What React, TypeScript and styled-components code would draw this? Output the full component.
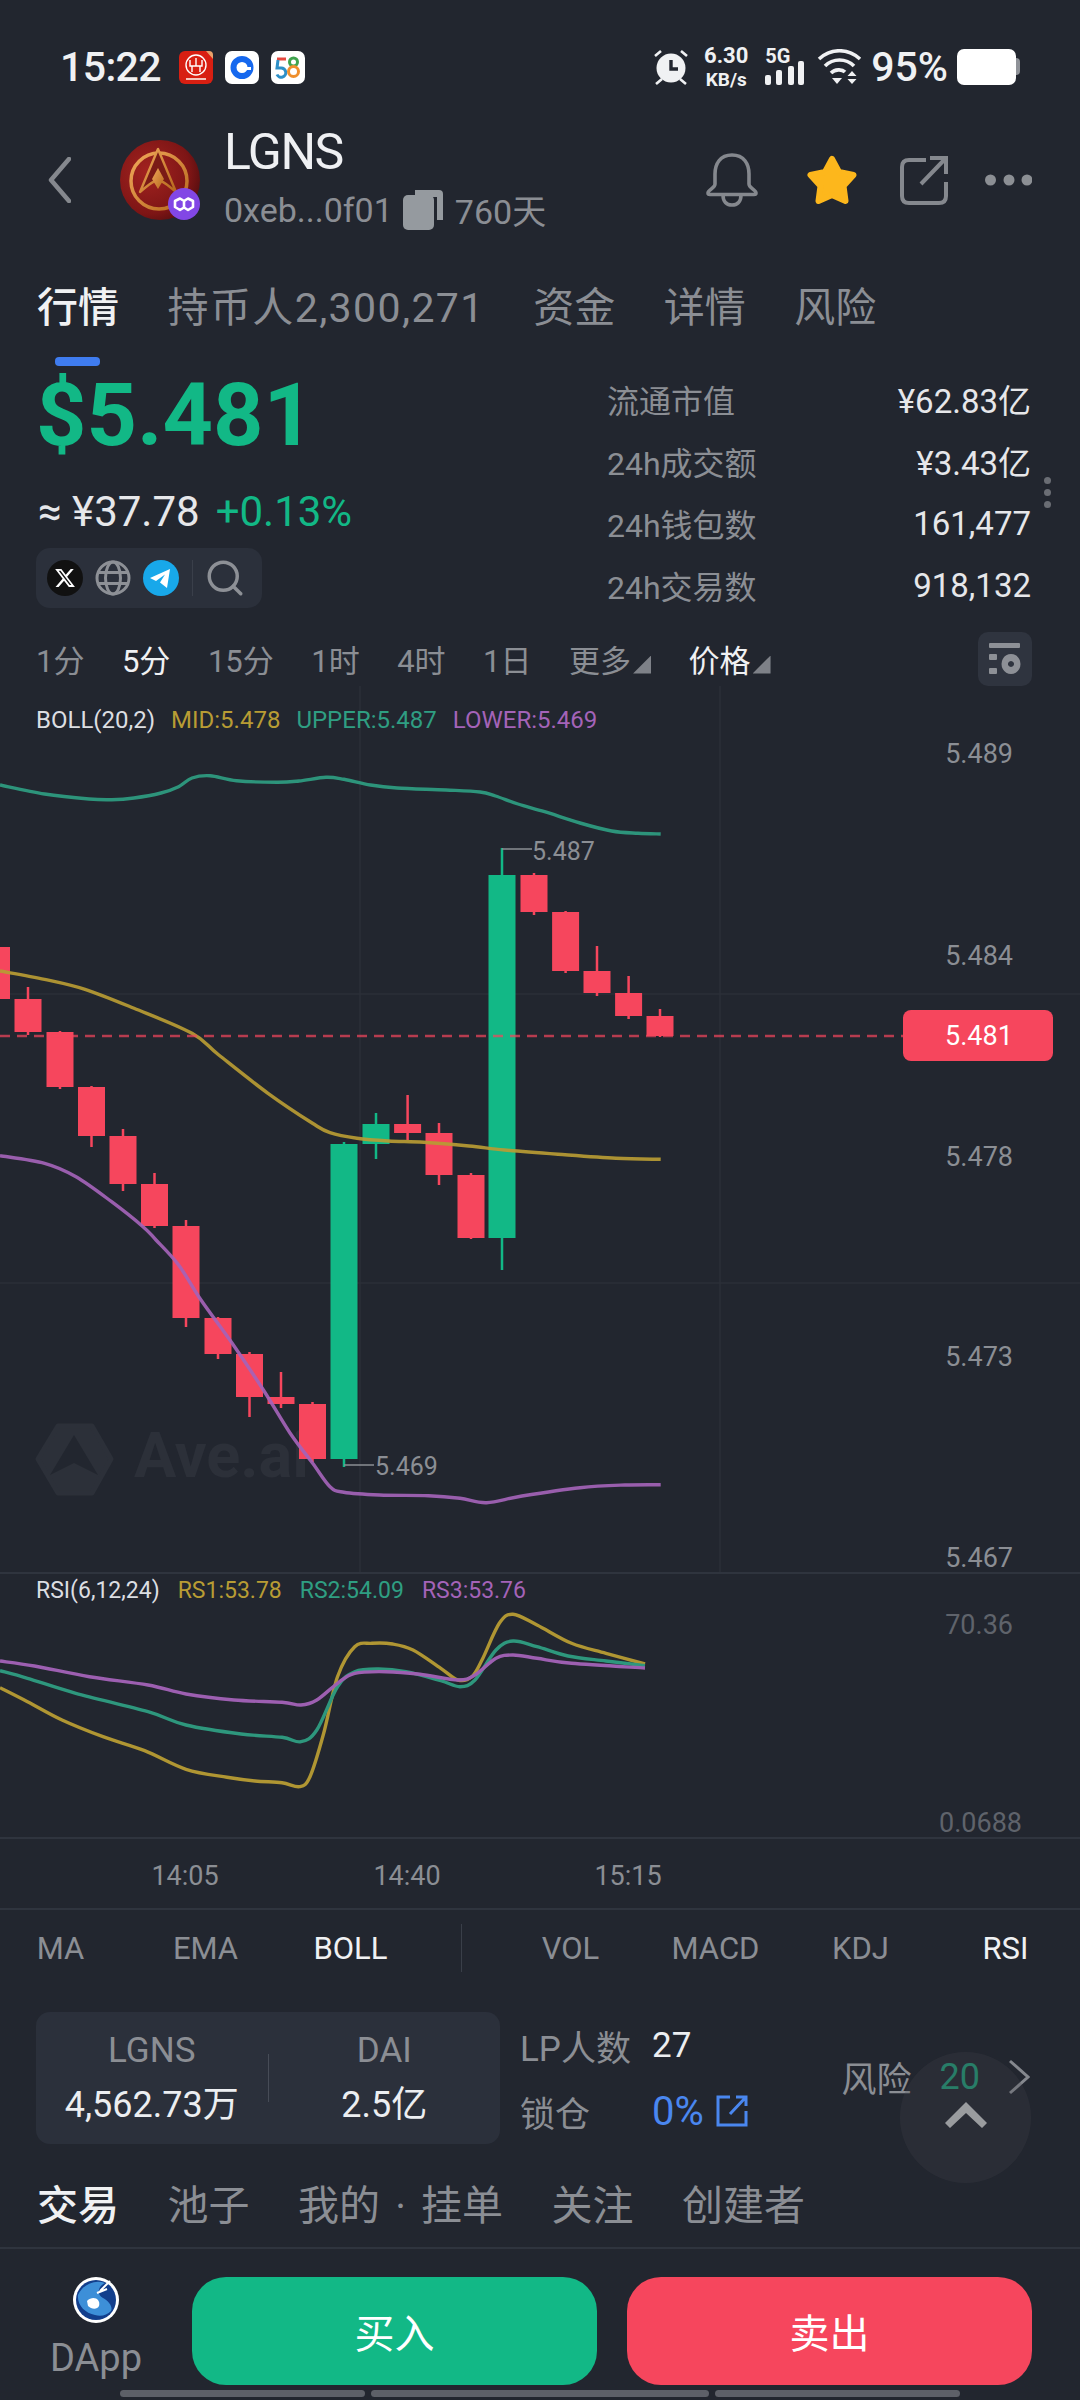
import React from "react";
import styled, { createGlobalStyle } from "styled-components";
import { Search } from "lucide-react";
import { FaXTwitter } from "react-icons/fa6";

const BG = "#22262f";
const PANEL = "#2b303b";
const GREY = "#8b8e94";
const LIGHT = "#eceef1";
const GREEN = "#12b886";
const RED = "#f6465d";
const LINE = "#2f343e";
const C_YELLOW = "#b89c34";
const C_TEAL = "#2f9e82";
const C_PURPLE = "#a463b8";

const GlobalStyle = createGlobalStyle`
  html, body { margin: 0; padding: 0; background: ${BG}; }
  * { box-sizing: border-box; }
  body { font-family: Roboto, "Noto Sans CJK SC", sans-serif; }
`;

const Page = styled.div`
  position: relative;
  width: 1080px;
  height: 2400px;
  overflow: hidden;
  background: ${BG};
  color: ${LIGHT};
  display: flex;
  flex-direction: column;
`;

// status bar
const StatusBar = styled.div`
  height: 128px;
  padding: 6px 60px 0 60px;
  display: flex;
  align-items: center;
  justify-content: space-between;
`;
const StatusLeft = styled.div`
  display: flex;
  align-items: center;
`;
const Clock = styled.span`
  font-size: 41px;
  font-weight: 500;
  letter-spacing: -0.6px;
  margin-right: 18px;
  color: #f0f1f3;
`;
const AppIcons = styled.div`
  display: flex;
  gap: 12px;
`;
const StatusRight = styled.div`
  display: flex;
  align-items: center;
  color: #f0f1f3;
`;
const Speed = styled.div`
  display: flex;
  flex-direction: column;
  align-items: center;
  width: 46px;
  margin: 0 16px 0 14px;
  font-weight: 700;
  line-height: 1;
`;
const SpeedValue = styled.span`
  font-size: 22px;
  margin-bottom: 3px;
`;
const SpeedUnit = styled.span`
  font-size: 19px;
`;
const Network = styled.div`
  display: flex;
  flex-direction: column;
  align-items: flex-start;
  width: 42px;
  margin-right: 10px;
`;
const FiveG = styled.span`
  font-size: 20px;
  font-weight: 700;
  line-height: 14px;
  margin-bottom: -2px;
`;
const Percent = styled.span`
  font-size: 41px;
  font-weight: 500;
  margin: 0 9px;
`;

// header
const Header = styled.div`
  height: 104px;
  padding: 0 48px;
  display: flex;
  align-items: center;
`;
const AvatarWrap = styled.div`
  position: relative;
  width: 80px;
  height: 80px;
  margin: 0 24px 0 49px;
`;
const Badge = styled.div`
  position: absolute;
  right: 0;
  bottom: 0;
  width: 32px;
  height: 32px;
  border-radius: 50%;
  background: #8247e5;
  display: flex;
  align-items: center;
  justify-content: center;
`;
const TokenInfo = styled.div`
  display: flex;
  flex-direction: column;
  gap: 12px;
  margin-bottom: 5px;
`;
const TokenName = styled.div`
  font-size: 50px;
  line-height: 52px;
  letter-spacing: -1.5px;
  color: #eff0f3;
`;
const TokenMeta = styled.div`
  display: flex;
  align-items: center;
  height: 40px;
  font-size: 34px;
  color: ${GREY};
`;
const HeaderActions = styled.div`
  margin-left: auto;
  display: flex;
  align-items: center;
`;

// tabs
const Tabs = styled.div<{ $top: number }>`
  display: flex;
  gap: 48.5px;
  height: 50px;
  margin-top: ${(p) => p.$top}px;
  padding-left: 37px;
  align-items: center;
`;
const Tab = styled.span<{ $active?: boolean; $spaced?: boolean }>`
  font-size: 41px;
  line-height: 50px;
  white-space: pre;
  word-spacing: 5px;
  letter-spacing: ${(p) => (p.$spaced ? 1.4 : 0)}px;
  font-weight: ${(p) => (p.$active ? 500 : 400)};
  color: ${(p) => (p.$active ? "#f0f1f3" : GREY)};
`;
const TabMarker = styled.div`
  width: 45px;
  height: 9px;
  border-radius: 4px;
  background: #3f7cf0;
  margin: 24px 0 0 55px;
`;

// quote
const Quote = styled.div`
  position: relative;
  height: 254px;
  padding: 4px 49px 0 36px;
  display: flex;
  justify-content: space-between;
`;
const QuoteLeft = styled.div`
  display: flex;
  flex-direction: column;
  align-items: flex-start;
`;
const Price = styled.div`
  font-size: 88px;
  line-height: 90px;
  font-weight: 700;
  color: ${GREEN};
`;
const Fiat = styled.div`
  font-size: 42px;
  line-height: 50px;
  margin: 27px 0 11px 2px;
  color: #e6e7ea;
`;
const Change = styled.span`
  color: ${GREEN};
  margin-left: 16px;
`;
const SocialBox = styled.div`
  width: 226px;
  height: 60px;
  border-radius: 14px;
  background: ${PANEL};
  display: flex;
  align-items: center;
  padding-left: 11px;
  gap: 12px;
`;
const SocialSep = styled.div`
  width: 1px;
  height: 36px;
  background: #3a3f4a;
  margin: 0 -1px 0 1px;
`;
const XIcon = styled.div`
  width: 36px;
  height: 36px;
  border-radius: 50%;
  background: #111;
  display: flex;
  align-items: center;
  justify-content: center;
  color: #fff;
`;
const Stats = styled.div`
  width: 424px;
  margin-top: -2px;
`;
const StatRow = styled.div`
  height: 62px;
  display: flex;
  align-items: center;
  justify-content: space-between;
  font-size: 32px;
`;
const StatLabel = styled.span`
  color: ${GREY};
`;
const StatValue = styled.span`
  font-size: 33px;
  color: #e6e7ea;
`;
const SideDots = styled.div`
  position: absolute;
  left: 1044px;
  top: 111px;
  display: flex;
  flex-direction: column;
  gap: 5px;
`;
const SideDot = styled.div`
  width: 7px;
  height: 7px;
  border-radius: 50%;
  background: #6a6d74;
`;

// timeframes
const Timeframes = styled.div`
  height: 54px;
  margin-top: 12px;
  padding: 0 48px 0 36px;
  display: flex;
  align-items: center;
  gap: 37.5px;
  font-size: 31px;
`;
const Frame = styled.span<{ $active?: boolean }>`
  color: ${(p) => (p.$active ? "#f0f1f3" : GREY)};
  display: flex;
  margin-bottom: 2px;
`;
const Corner = styled.i`
  width: 18px;
  height: 18px;
  margin: 20px 0 0 2px;
  background: #7e8188;
  clip-path: polygon(100% 0, 100% 100%, 0 100%);
`;
const SettingsButton = styled.div`
  margin-left: auto;
  width: 54px;
  height: 54px;
  border-radius: 10px;
  background: #2f343f;
  display: flex;
  align-items: center;
  justify-content: center;
`;

// charts
const Chart = styled.div<{ $h: number }>`
  position: relative;
  height: ${(p) => p.$h}px;
  border-bottom: 2px solid ${LINE};
  flex: none;
`;
const Canvas = styled.svg`
  position: absolute;
  left: 0;
  top: 0;
`;
const Legend = styled.div<{ $top: number; $size: number; $gap: number }>`
  position: absolute;
  left: 36px;
  top: ${(p) => p.$top}px;
  display: flex;
  gap: ${(p) => p.$gap}px;
  font-size: ${(p) => p.$size}px;
  line-height: 28px;
  white-space: nowrap;
`;
const LegendItem = styled.span<{ $color: string }>`
  color: ${(p) => p.$color};
`;
const AxisLabel = styled.span<{ $y: number; $dim?: boolean }>`
  position: absolute;
  right: 67px;
  top: ${(p) => p.$y - 15}px;
  font-size: 27px;
  line-height: 32px;
  color: ${(p) => (p.$dim ? "#5f636b" : GREY)};
`;
const AxisLabelCenter = styled(AxisLabel)`
  right: 58px;
`;
const PeakLabel = styled.span<{ $x: number; $y: number }>`
  position: absolute;
  left: ${(p) => p.$x}px;
  top: ${(p) => p.$y - 15}px;
  font-size: 25px;
  line-height: 30px;
  color: ${GREY};
`;
const PriceTag = styled.div`
  position: absolute;
  left: 903px;
  top: 324px;
  width: 150px;
  height: 51px;
  border-radius: 8px;
  background: ${RED};
  color: #fff;
  font-size: 27px;
  padding-left: 2px;
  display: flex;
  align-items: center;
  justify-content: center;
`;
const Watermark = styled.span`
  position: absolute;
  left: 134px;
  top: 734px;
  font-size: 63px;
  line-height: 72px;
  font-weight: 700;
  color: #2c3039;
`;
const TimeLabel = styled.span<{ $x: number }>`
  position: absolute;
  left: ${(p) => p.$x}px;
  top: 21px;
  transform: translateX(-50%);
  font-size: 27px;
  line-height: 32px;
  color: ${GREY};
`;

// indicators
const Indicators = styled.div`
  height: 76px;
  display: flex;
  align-items: center;
  margin-left: -12px;
`;
const IndicatorCell = styled.span<{ $active?: boolean }>`
  flex: none;
  width: 145px;
  text-align: center;
  font-size: 31px;
  color: ${(p) => (p.$active ? "#f0f1f3" : GREY)};
`;
const IndicatorSep = styled.div`
  flex: none;
  width: 1px;
  height: 48px;
  background: #3a3f49;
  margin: 0 36px 0 38px;
`;

// pool row
const PoolRow = styled.div`
  height: 132px;
  margin-top: 26px;
  padding: 0 50px 0 36px;
  display: flex;
  align-items: center;
`;
const PoolCard = styled.div`
  width: 464px;
  height: 132px;
  border-radius: 14px;
  background: ${PANEL};
  display: flex;
  align-items: center;
`;
const PoolCol = styled.div`
  flex: 1;
  display: flex;
  flex-direction: column;
  align-items: center;
  gap: 10px;
`;
const PoolName = styled.span`
  font-size: 35px;
  line-height: 44px;
  color: ${GREY};
`;
const PoolValue = styled.span`
  font-size: 36px;
  line-height: 44px;
  color: #eceef1;
`;
const PoolSep = styled.div`
  width: 1px;
  height: 48px;
  background: #474c57;
`;
const LpCol = styled.div`
  margin-left: 20px;
  display: flex;
  flex-direction: column;
`;
const LpRow = styled.div`
  height: 66px;
  display: flex;
  align-items: center;
  font-size: 35px;
`;
const LpLabel = styled.span`
  width: 132px;
  color: ${GREY};
`;
const LockValue = styled.span`
  font-size: 40px;
  color: #4a87f0;
  margin-right: 12px;
`;
const Risk = styled.div`
  margin-left: auto;
  display: flex;
  align-items: center;
  font-size: 35px;
  color: ${GREY};
  margin-bottom: 3px;
`;
const RiskScore = styled.span`
  font-size: 36px;
  color: #1f8f70;
  margin: 0 28px;
`;
const FloatingTop = styled.div`
  position: absolute;
  left: 900px;
  top: 2052px;
  width: 131px;
  height: 131px;
  border-radius: 50%;
  background: rgba(70, 72, 78, 0.24);
  display: flex;
  justify-content: center;
  padding-top: 50px;
`;

// bottom
const Divider = styled.div`
  height: 2px;
  margin-top: 16px;
  background: ${LINE};
`;
const ActionBar = styled.div`
  height: 136px;
  padding: 28px 48px 0 36px;
  display: flex;
`;
const DappCol = styled.div`
  width: 120px;
  margin-right: 36px;
  display: flex;
  flex-direction: column;
  align-items: center;
  gap: 13px;
`;
const DappLabel = styled.span`
  font-size: 38px;
  line-height: 44px;
  color: ${GREY};
`;
const TradeButton = styled.div<{ $color: string }>`
  width: 405px;
  height: 108px;
  border-radius: 34px;
  background: ${(p) => p.$color};
  color: #fff;
  font-size: 40px;
  display: flex;
  align-items: center;
  justify-content: center;
  margin-right: 30px;
  &:last-child { margin-right: 0; }
`;
const NavPills = styled.div`
  margin-top: 5px;
  display: flex;
  justify-content: center;
  gap: 6px;
`;
const NavPill = styled.div<{ $w: number }>`
  width: ${(p) => p.$w}px;
  height: 7px;
  border-radius: 4px;
  background: #5d6068;
`;

// chart data, absolute page coordinates
type P = [number, number];

const smooth = (pts: P[]) => {
  let d = `M${pts[0][0]} ${pts[0][1]}`;
  for (let i = 0; i < pts.length - 1; i++) {
    const p0 = pts[i - 1] || pts[i];
    const p1 = pts[i];
    const p2 = pts[i + 1];
    const p3 = pts[i + 2] || p2;
    const c1x = p1[0] + (p2[0] - p0[0]) / 6;
    const c1y = p1[1] + (p2[1] - p0[1]) / 6;
    const c2x = p2[0] - (p3[0] - p1[0]) / 6;
    const c2y = p2[1] - (p3[1] - p1[1]) / 6;
    d += `C${c1x} ${c1y} ${c2x} ${c2y} ${p2[0]} ${p2[1]}`;
  }
  return d;
};

const upper: P[] = [[0,785],[44.6,794],[89,799],[111.6,799.7],[134,798],[161,793],[178.6,786.7],[192,778],[210,775.7],[236.6,780.7],[277,782.3],[299,781],[326,777.3],[344,779.3],[370.5,785],[397,788],[446,790],[480,792],[495.5,796],[518,804],[544.6,811.7],[580,823],[611.6,831],[638,833.3],[660.7,834]];
const mid: P[] = [[0,971],[44.6,979.3],[85,989.3],[134,1008.3],[192,1033.3],[218.8,1055],[268,1093.3],[312.5,1123.3],[330,1132.7],[357,1138.3],[388.4,1141],[424,1142.3],[469,1146],[504.5,1150],[558,1154.3],[616,1158.3],[660.7,1159.3]];
const lower: P[] = [[0,1155.7],[44.6,1163.3],[76,1176.7],[111.6,1201.7],[143,1226.7],[156,1240],[178.6,1265],[201,1300],[232,1343],[263.4,1390],[290,1433],[312.5,1463],[330,1486.7],[343.8,1492.3],[379.5,1495],[428.6,1495.7],[460,1498.3],[486.6,1502.7],[522,1496],[580,1487.7],[625,1485],[660.7,1484.7]];

const rsi1: P[] = [[0,1687.7],[27.5,1701.7],[62,1720],[103,1736.7],[144.6,1750.7],[186,1769.3],[227,1777.3],[255,1781],[282,1782.7],[299.6,1786.7],[310,1776.7],[323.7,1733.3],[337.5,1676.7],[354.7,1646.7],[372,1643.3],[392.6,1644],[413,1650],[440.8,1668.3],[458,1680],[471.8,1676.7],[482,1660],[499.3,1623.3],[513,1614.3],[537,1625],[571.6,1643.3],[606,1653.3],[645,1664]];
const rsi2: P[] = [[0,1670.7],[27.5,1678.3],[75.8,1693.3],[148,1711.7],[186,1725],[241,1734],[282,1737.3],[301,1741.7],[316.8,1730],[337.5,1686.7],[354.7,1671.7],[378.8,1669],[406,1671.7],[440.8,1680.7],[460,1686.7],[475,1680],[496,1650],[513,1641],[537,1646.7],[568,1656],[606,1661],[645,1665.7]];
const rsi3: P[] = [[0,1661],[34.4,1666],[89.5,1676.7],[148,1685],[186,1694],[234,1700],[282,1702.3],[301,1705],[316.8,1700],[337.5,1683.3],[354.7,1673.3],[385.7,1671.7],[420,1674.3],[458,1680],[475,1675],[496,1658.3],[513,1655],[537,1658.3],[571.6,1663.3],[645,1668]];

// cx, body top, body bottom, wick top, wick bottom, up
const candles: [number, number, number, number, number, boolean][] = [
  [-3.5, 947, 999, 947, 999, false],
  [28, 999, 1032, 987, 1035, false],
  [60, 1032, 1087, 1031, 1089, false],
  [91.5, 1087, 1136, 1086, 1147, false],
  [123, 1136, 1184, 1129, 1191, false],
  [154.5, 1184, 1226, 1173, 1228, false],
  [186, 1226, 1318, 1220, 1327, false],
  [218, 1318, 1354, 1317, 1359, false],
  [249.5, 1354, 1397, 1352, 1417, false],
  [281, 1397, 1404, 1372, 1408, false],
  [312.5, 1404, 1459, 1402, 1462, false],
  [344, 1144, 1459, 1142, 1467, true],
  [376, 1124, 1144, 1113, 1159, true],
  [407.6, 1124, 1133, 1095, 1140, false],
  [439, 1133, 1175, 1123, 1185, false],
  [471, 1175, 1238, 1173, 1239, false],
  [502, 875, 1238, 848, 1270, true],
  [534, 875, 912, 873, 915, false],
  [565.6, 912, 971, 911, 973, false],
  [597, 971, 993, 946, 996, false],
  [628.6, 993, 1016, 976, 1019, false],
  [660, 1016, 1036, 1009, 1037, false],
];

const axis = [
  { v: "5.489", y: 67 },
  { v: "5.484", y: 269 },
  { v: "5.478", y: 470 },
  { v: "5.473", y: 670 },
  { v: "5.467", y: 871 },
];

const frames = ["1分", "5分", "15分", "1时", "4时", "1日"];

const stats = [
  ["流通市值", "¥62.83亿"],
  ["24h成交额", "¥3.43亿"],
  ["24h钱包数", "161,477"],
  ["24h交易数", "918,132"],
];

// icons
const RedApp = () => (
  <svg width="34" height="33" viewBox="0 0 34 33">
    <rect width="34" height="33" rx="6" fill="#d81f12" />
    <path d="M27 0h3a4 4 0 0 1 4 4v4z" fill="#e9a16a" />
    <circle cx="17" cy="14" r="10" fill="none" stroke="#fff" strokeWidth="1.4" />
    <path d="M11 9v6h12V9M17 7v8M13 15v6M21 15v6" fill="none" stroke="#fff" strokeWidth="1.4" />
    <rect x="7" y="27" width="20" height="2" fill="#f4c4bc" />
  </svg>
);
const BlueApp = () => (
  <svg width="34" height="33" viewBox="0 0 34 33">
    <rect width="34" height="33" rx="7" fill="#fff" />
    <circle cx="17" cy="16.5" r="8.5" fill="none" stroke="#1668ee" strokeWidth="6" />
    <path d="M17 16h9v3h-6z" fill="#fff" />
  </svg>
);
const FiftyEightApp = () => (
  <svg width="34" height="33" viewBox="0 0 34 33">
    <rect width="34" height="33" rx="7" fill="#fff" />
    <path d="M6 8h9" stroke="#e6483f" strokeWidth="3" />
    <path d="M7 9l-1 8h4a4.6 4.6 0 1 1-4 6.5" fill="none" stroke="#2d8fc7" strokeWidth="3" />
    <circle cx="22.5" cy="11" r="4" fill="none" stroke="#3fa34d" strokeWidth="3" />
    <circle cx="22.5" cy="20.5" r="5" fill="none" stroke="#ef8f2c" strokeWidth="3" />
  </svg>
);
const Alarm = () => (
  <svg width="36" height="36" viewBox="0 0 36 36" style={{ display: "block" }}>
    <circle cx="18" cy="19" r="14.5" fill="#f0f1f3" />
    <path d="M18 11v9h7" fill="none" stroke="#22262f" strokeWidth="3.4" />
    <path d="M2 7l6-5M34 7l-6-5M3 35l6-5M33 35l-6-5" stroke="#f0f1f3" strokeWidth="2.6" />
  </svg>
);
const Signal = () => (
  <svg width="40" height="24" viewBox="0 0 40 24" style={{ display: "block" }}>
    <rect x="0" y="14" width="6" height="10" rx="2" fill="#f0f1f3" />
    <rect x="11" y="9" width="6" height="15" rx="2" fill="#f0f1f3" />
    <rect x="23" y="5" width="6" height="19" rx="2" fill="#f0f1f3" />
    <rect x="33" y="0" width="6" height="24" rx="2" fill="#f0f1f3" />
  </svg>
);
const Wifi = () => (
  <svg width="45" height="36" viewBox="0 0 45 36" style={{ display: "block" }}>
    <g fill="none" stroke="#f0f1f3" strokeWidth="3.6">
      <path d="M2 10C14 -1 31 -1 43 10" />
      <path d="M8 17C16 9 29 9 37 17" />
      <path d="M14 24C18 20 25 20 28 23" />
    </g>
    <path d="M15 29h10l-5 6z" fill="#f0f1f3" />
    <path d="M35 22l4.500 5h-9zM35 35l4.500-5h-9z" fill="#f0f1f3" />
  </svg>
);
const Battery = () => (
  <svg width="63" height="36" viewBox="0 0 63 36" style={{ display: "block" }}>
    <rect x="50" y="9" width="13" height="17" rx="4" fill="#8f9298" />
    <rect x="0" y="0" width="59" height="36" rx="7" fill="#fff" />
  </svg>
);
const Back = () => (
  <svg width="23" height="46" viewBox="0 0 23 46">
    <path d="M21 2L3 23l18 21" fill="none" stroke="#85888e" strokeWidth="4.500" strokeLinecap="round" strokeLinejoin="round" />
  </svg>
);
const Avatar = () => (
  <svg width="80" height="80" viewBox="0 0 80 80" style={{ display: "block" }}>
    <defs>
      <radialGradient id="av" cx="35%" cy="40%" r="75%">
        <stop offset="0%" stopColor="#a32320" />
        <stop offset="70%" stopColor="#7d1515" />
        <stop offset="100%" stopColor="#4a0c0e" />
      </radialGradient>
      <linearGradient id="gold" x1="0" y1="0" x2="1" y2="1">
        <stop offset="0%" stopColor="#f0a85a" />
        <stop offset="100%" stopColor="#b5671c" />
      </linearGradient>
    </defs>
    <circle cx="40" cy="40" r="40" fill="url(#av)" />
    <circle cx="39" cy="41" r="28" fill="none" stroke="url(#gold)" strokeWidth="3.500" />
    <path d="M38 9L20 52Q34 40 38 40Q42 40 56 52Z" fill="#7a1a16" stroke="url(#gold)" strokeWidth="2.400" strokeLinejoin="round" />
    <path d="M38 28l6 11-6 10-6-10z" fill="url(#gold)" />
  </svg>
);
const Polygon = () => (
  <svg width="24" height="22" viewBox="0 0 24 22" fill="none" stroke="#fff" strokeWidth="2.600" strokeLinejoin="round">
    <path d="M12 8L8 5.500 3 8v6l5 3 4-2.500V8z" />
    <path d="M12 8l4-2.500L21 8v6l-5 3-4-2.500" />
  </svg>
);
const Copy = () => (
  <svg width="40" height="40" viewBox="0 0 40 40" style={{ margin: "0 12px 0 10px" }}>
    <path d="M12 0h24a4 4 0 0 1 4 4v26h-6V7H12z" fill="#959a9f" />
    <rect x="0" y="5" width="31" height="35" rx="5" fill="#959a9f" />
  </svg>
);
const Bell = () => (
  <svg width="52" height="54" viewBox="0 0 52 54" fill="none" stroke="#85888e" strokeWidth="3.600" strokeLinejoin="round" style={{ marginRight: 48 }}>
    <path d="M26 2C14 2 9 11 9 21V31C9 35 2 37 2 40Q2 41.500 4 41.500H48Q50 41.500 50 40C50 37 43 35 43 31V21C43 11 38 2 26 2Z" />
    <path d="M17 42C17 49 21 52 26 52C31 52 35 49 35 42" />
  </svg>
);
const Star = () => (
  <svg width="52" height="50" viewBox="0 0 52 50" style={{ marginRight: 42 }}>
    <path d="M26 4L33 17L47.500 20L37.500 31L39.500 46L26 40L12.500 46L14.500 31L4.500 20L19 17Z" fill="#fdb71c" stroke="#fdb71c" strokeWidth="6" strokeLinejoin="round" />
  </svg>
);
const Share = () => (
  <svg width="48" height="49" viewBox="0 0 48 49" fill="none" stroke="#85888e" strokeWidth="4" style={{ marginRight: 37 }}>
    <path d="M26 4H9Q2 4 2 11V40Q2 47 9 47H39Q46 47 46 40V26" />
    <path d="M21 28L45 3M30 2H46V18" />
  </svg>
);
const Dots = () => (
  <svg width="47" height="12" viewBox="0 0 47 12" fill="#8c8f94">
    <circle cx="5.500" cy="6" r="5.500" />
    <circle cx="24" cy="6" r="5.500" />
    <circle cx="42" cy="6" r="5.500" />
  </svg>
);
const Globe = () => (
  <svg width="36" height="36" viewBox="0 0 36 36" fill="none" stroke="#8d9096" strokeWidth="3">
    <circle cx="18" cy="18" r="16" />
    <ellipse cx="18" cy="18" rx="7.500" ry="16" />
    <path d="M3 12.500h30M3 23.500h30" />
  </svg>
);
const Telegram = () => (
  <svg width="36" height="36" viewBox="0 0 36 36">
    <circle cx="18" cy="18" r="18" fill="#18a8ea" />
    <path d="M7 18L27 9L24 28L17 22.500L22 14.500L13 21Z" fill="#fff" />
  </svg>
);
const Settings = () => (
  <svg width="32" height="32" viewBox="0 0 32 32" fill="#8d9096">
    <rect x="0" y="0" width="31" height="5" rx="1" />
    <rect x="0" y="11" width="8" height="6" rx="1" />
    <rect x="0" y="25" width="8" height="6" rx="1" />
    <path fillRule="evenodd" d="M22 11a9.500 10 0 1 0 .01 0zM22 18a3 3 0 1 1-.01 0z" />
  </svg>
);
const External = () => (
  <svg width="32" height="32" viewBox="0 0 32 32" fill="none" stroke="#4a87f0" strokeWidth="3">
    <path d="M14 2H2V30H30V16" />
    <path d="M14 19L30 2M20 2H30V11" />
  </svg>
);
const Chevron = () => (
  <svg width="22" height="36" viewBox="0 0 22 36" fill="none" stroke="#85888e" strokeWidth="3">
    <path d="M2 2L20 18L2 34" />
  </svg>
);
const ChevronUp = () => (
  <svg width="42" height="26" viewBox="0 0 42 26">
    <path d="M21 0L42 21L37 26L21 11L5 26L0 21Z" fill="#9a9c9f" />
  </svg>
);
const Dapp = () => (
  <svg width="46" height="46" viewBox="0 0 46 46">
    <circle cx="23" cy="23" r="23" fill="#fff" />
    <circle cx="23" cy="23" r="20" fill="#123e8c" />
    <path d="M5 18C10 7 22 2 32 6C24 10 24 18 30 21C36 24 40 30 38 34C34 38 28 40 22 38C12 36 4 28 5 18Z" fill="#3d8fd8" />
    <path d="M14 24C20 18 28 22 26 29C24 33 18 32 15 29Z" fill="#fff" />
    <path d="M27 14L37 4M24 16L34 12" stroke="#fff" strokeWidth="2" />
  </svg>
);

const MainCanvas = () => (
  <Canvas width="1080" height="886" viewBox="0 686 1080 886">
    <g stroke="#2b2f39" strokeWidth="1.500">
      <path d="M360 686V1572M720 686V1572M0 994H1080M0 1283H1080" />
    </g>
    <path d="M58 1426H92L111 1459L92 1493H58L38 1459Z" fill="#2c3039" stroke="#2c3039" strokeWidth="5" strokeLinejoin="round" />
    <path d="M74 1435L98 1475L74 1463L50 1475Z" fill={BG} />
    {candles.map(([cx, top, bottom, wt, wb, up]) => (
      <g key={cx} fill={up ? GREEN : RED}>
        <rect x={cx - 1.25} y={wt} width="2.500" height={wb - wt} />
        <rect x={cx - 13.5} y={top} width="27" height={bottom - top} />
      </g>
    ))}
    <path d="M502 849H532M344 1465H374" stroke={GREY} strokeWidth="1.500" fill="none" />
    <g fill="none" strokeWidth="3.400" opacity="0.92">
      <path d={smooth(upper)} stroke={C_TEAL} />
      <path d={smooth(mid)} stroke={C_YELLOW} />
      <path d={smooth(lower)} stroke={C_PURPLE} />
    </g>
    <path d="M0 1036H905" stroke={RED} strokeWidth="2.400" strokeDasharray="10 7" opacity="0.7" />
  </Canvas>
);

const RsiCanvas = () => (
  <Canvas width="1080" height="264" viewBox="0 1574 1080 264">
    <g fill="none" strokeWidth="3.400" opacity="0.95">
      <path d={smooth(rsi1)} stroke={C_YELLOW} />
      <path d={smooth(rsi2)} stroke={C_TEAL} />
      <path d={smooth(rsi3)} stroke={C_PURPLE} />
    </g>
  </Canvas>
);

export default function App() {
  return (
    <Page>
      <GlobalStyle />
      <StatusBar>
        <StatusLeft>
          <Clock>15:22</Clock>
          <AppIcons>
            <RedApp />
            <BlueApp />
            <FiftyEightApp />
          </AppIcons>
        </StatusLeft>
        <StatusRight>
          <Alarm />
          <Speed>
            <SpeedValue>6.30</SpeedValue>
            <SpeedUnit>KB/s</SpeedUnit>
          </Speed>
          <Network>
            <FiveG>5G</FiveG>
            <Signal />
          </Network>
          <Wifi />
          <Percent>95%</Percent>
          <Battery />
        </StatusRight>
      </StatusBar>

      <Header>
        <Back />
        <AvatarWrap>
          <Avatar />
          <Badge>
            <Polygon />
          </Badge>
        </AvatarWrap>
        <TokenInfo>
          <TokenName>LGNS</TokenName>
          <TokenMeta>
            0xeb...0f01
            <Copy />
            760天
          </TokenMeta>
        </TokenInfo>
        <HeaderActions>
          <Bell />
          <Star />
          <Share />
          <Dots />
        </HeaderActions>
      </Header>

      <Tabs $top={51}>
        <Tab $active>行情</Tab>
        <Tab $spaced>持币人2,300,271</Tab>
        <Tab>资金</Tab>
        <Tab>详情</Tab>
        <Tab>风险</Tab>
      </Tabs>
      <TabMarker />

      <Quote>
        <QuoteLeft>
          <Price>$5.481</Price>
          <Fiat>
            ≈ ¥37.78<Change>+0.13%</Change>
          </Fiat>
          <SocialBox>
            <XIcon>
              <FaXTwitter size={22} />
            </XIcon>
            <Globe />
            <Telegram />
            <SocialSep />
            <Search size={42} color="#8d9096" strokeWidth={2} />
          </SocialBox>
        </QuoteLeft>
        <Stats>
          {stats.map(([label, value]) => (
            <StatRow key={label}>
              <StatLabel>{label}</StatLabel>
              <StatValue>{value}</StatValue>
            </StatRow>
          ))}
        </Stats>
        <SideDots>
          <SideDot />
          <SideDot />
          <SideDot />
        </SideDots>
      </Quote>

      <Timeframes>
        {frames.map((f) => (
          <Frame key={f} $active={f === "5分"}>
            {f}
          </Frame>
        ))}
        <Frame>
          更多
          <Corner />
        </Frame>
        <Frame $active>
          价格
          <Corner />
        </Frame>
        <SettingsButton>
          <Settings />
        </SettingsButton>
      </Timeframes>

      <Chart $h={888}>
        <Watermark>Ave.ai</Watermark>
        <MainCanvas />
        <Legend $top={20} $size={24} $gap={16}>
          <LegendItem $color="#dcdee2">BOLL(20,2)</LegendItem>
          <LegendItem $color={C_YELLOW}>MID:5.478</LegendItem>
          <LegendItem $color={C_TEAL}>UPPER:5.487</LegendItem>
          <LegendItem $color={C_PURPLE}>LOWER:5.469</LegendItem>
        </Legend>
        {axis.map((a) => (
          <AxisLabel key={a.v} $y={a.y}>
            {a.v}
          </AxisLabel>
        ))}
        <PeakLabel $x={532} $y={166}>5.487</PeakLabel>
        <PeakLabel $x={375} $y={781}>5.469</PeakLabel>
        <PriceTag>5.481</PriceTag>
      </Chart>

      <Chart $h={265}>
        <RsiCanvas />
        <Legend $top={3} $size={23} $gap={18}>
          <LegendItem $color="#dcdee2">RSI(6,12,24)</LegendItem>
          <LegendItem $color={C_YELLOW}>RS1:53.78</LegendItem>
          <LegendItem $color={C_TEAL}>RS2:54.09</LegendItem>
          <LegendItem $color={C_PURPLE}>RS3:53.76</LegendItem>
        </Legend>
        <AxisLabel $y={50} $dim>70.36</AxisLabel>
        <AxisLabelCenter $y={248} $dim>0.0688</AxisLabelCenter>
      </Chart>

      <Chart $h={71}>
        <TimeLabel $x={185}>14:05</TimeLabel>
        <TimeLabel $x={407}>14:40</TimeLabel>
        <TimeLabel $x={628}>15:15</TimeLabel>
      </Chart>

      <Indicators>
        <IndicatorCell>MA</IndicatorCell>
        <IndicatorCell>EMA</IndicatorCell>
        <IndicatorCell $active>BOLL</IndicatorCell>
        <IndicatorSep />
        <IndicatorCell>VOL</IndicatorCell>
        <IndicatorCell>MACD</IndicatorCell>
        <IndicatorCell>KDJ</IndicatorCell>
        <IndicatorCell $active>RSI</IndicatorCell>
      </Indicators>

      <PoolRow>
        <PoolCard>
          <PoolCol>
            <PoolName>LGNS</PoolName>
            <PoolValue>4,562.73万</PoolValue>
          </PoolCol>
          <PoolSep />
          <PoolCol>
            <PoolName>DAI</PoolName>
            <PoolValue>2.5亿</PoolValue>
          </PoolCol>
        </PoolCard>
        <LpCol>
          <LpRow>
            <LpLabel>LP人数</LpLabel>
            27
          </LpRow>
          <LpRow>
            <LpLabel>锁仓</LpLabel>
            <LockValue>0%</LockValue>
            <External />
          </LpRow>
        </LpCol>
        <Risk>
          风险
          <RiskScore>20</RiskScore>
          <Chevron />
        </Risk>
      </PoolRow>
      <FloatingTop>
        <ChevronUp />
      </FloatingTop>

      <Tabs $top={37}>
        <Tab $active>交易</Tab>
        <Tab>池子</Tab>
        <Tab>我的 · 挂单</Tab>
        <Tab>关注</Tab>
        <Tab>创建者</Tab>
      </Tabs>
      <Divider />

      <ActionBar>
        <DappCol>
          <Dapp />
          <DappLabel>DApp</DappLabel>
        </DappCol>
        <TradeButton $color={GREEN}>买入</TradeButton>
        <TradeButton $color={RED}>卖出</TradeButton>
      </ActionBar>
      <NavPills>
        <NavPill $w={245} />
        <NavPill $w={338} />
        <NavPill $w={245} />
      </NavPills>
    </Page>
  );
}
